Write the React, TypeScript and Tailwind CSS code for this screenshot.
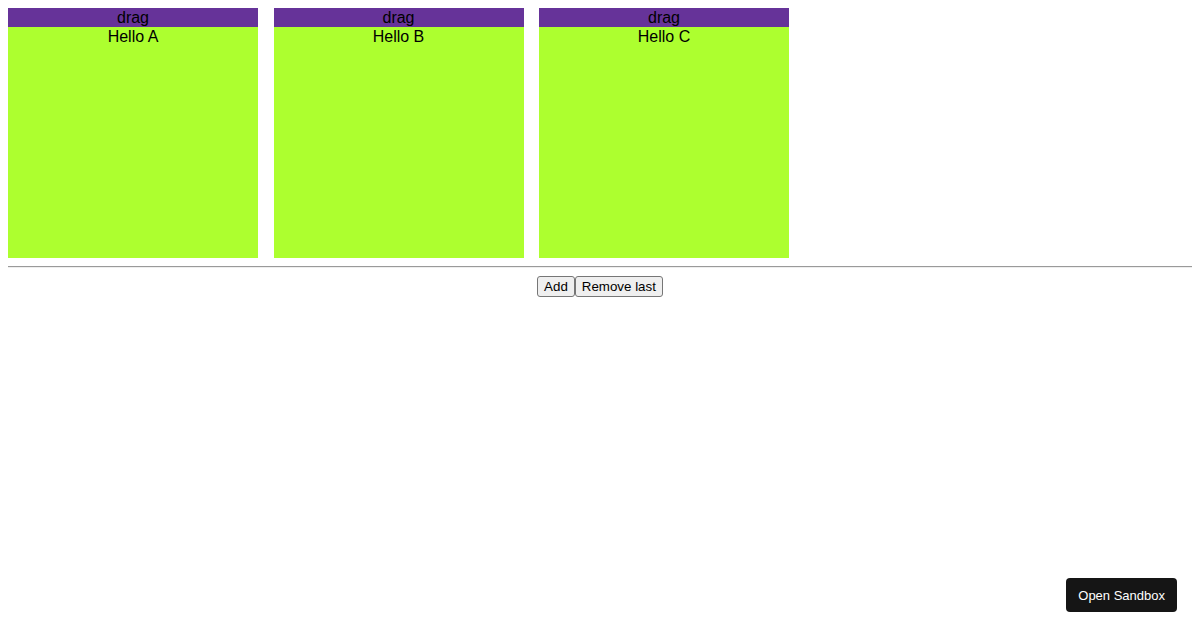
const cards = ["A", "B", "C"];

function Card({ label }: { label: string }) {
  return (
    <div className="flex h-[250px] w-[250px] flex-col bg-[#adff2f] text-center leading-[19px]">
      <div className="bg-[#663399]">drag</div>
      <div>Hello {label}</div>
    </div>
  );
}

export default function App() {
  return (
    <div className="min-h-screen bg-white p-2 font-['Liberation_Sans',Arial,sans-serif] text-base leading-[normal] text-black">
      <div className="flex gap-[15.5px]">
        {cards.map((c) => (
          <Card key={c} label={c} />
        ))}
      </div>

      <hr className="my-2 border-t border-b border-t-[#9a9a9a] border-b-[#eeeeee]" />

      <div className="flex justify-center text-[13.333px]">
        <button className="rounded-[3px] border border-[#767676] bg-[#efefef] px-[6px] py-[2px]">Add</button>
        <button className="rounded-[3px] border border-[#767676] bg-[#efefef] px-[6px] py-[2px]">Remove last</button>
      </div>

      <button className="fixed bottom-[18px] right-[23px] flex h-[34px] items-center rounded-[4px] bg-[#151515] px-[12px] text-[13px] text-white">
        Open Sandbox
      </button>
    </div>
  );
}
